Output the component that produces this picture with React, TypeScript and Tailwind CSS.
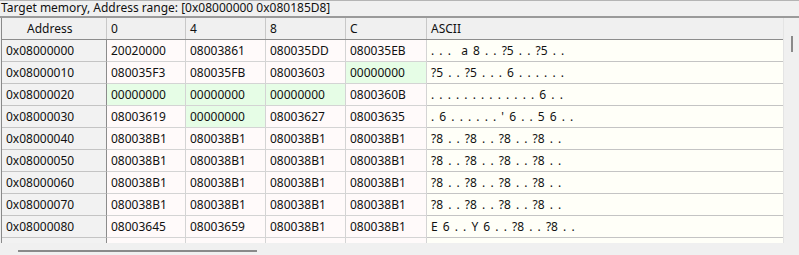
import React from "react";

interface Row {
  addr: string;
  words: string[];
  ascii: string;
}

const rows: Row[] = [
  { addr: "0x08000000", words: ["20020000", "08003861", "080035DD", "080035EB"], ascii: ". . .  a 8 . . ?5 . . ?5 . ." },
  { addr: "0x08000010", words: ["080035F3", "080035FB", "08003603", "00000000"], ascii: "?5 . . ?5 . . . 6 . . . . . ." },
  { addr: "0x08000020", words: ["00000000", "00000000", "00000000", "0800360B"], ascii: ". . . . . . . . . . . . . 6 . ." },
  { addr: "0x08000030", words: ["08003619", "00000000", "08003627", "08003635"], ascii: ". 6 . . . . . . ' 6 . . 5 6 . ." },
  { addr: "0x08000040", words: ["080038B1", "080038B1", "080038B1", "080038B1"], ascii: "?8 . . ?8 . . ?8 . . ?8 . ." },
  { addr: "0x08000050", words: ["080038B1", "080038B1", "080038B1", "080038B1"], ascii: "?8 . . ?8 . . ?8 . . ?8 . ." },
  { addr: "0x08000060", words: ["080038B1", "080038B1", "080038B1", "080038B1"], ascii: "?8 . . ?8 . . ?8 . . ?8 . ." },
  { addr: "0x08000070", words: ["080038B1", "080038B1", "080038B1", "080038B1"], ascii: "?8 . . ?8 . . ?8 . . ?8 . ." },
  { addr: "0x08000080", words: ["08003645", "08003659", "080038B1", "080038B1"], ascii: "E 6 . . Y 6 . . ?8 . . ?8 . ." },
  { addr: "", words: ["", "", "", ""], ascii: "" },
];

const cols = "grid grid-cols-[105px_79px_80px_80px_81px_1fr]";

export default function App() {
  return (
    <div
      className="w-[799px] h-[255px] bg-[#f0f0f0] text-[12px] text-[#111] overflow-hidden flex flex-col"
      style={{ fontFamily: '"Noto Sans", "Open Sans", sans-serif' }}
    >
      {/* title */}
      <div className="h-[16px] border-t border-[#b4b4b4] leading-[14px] pl-px whitespace-pre">
        Target memory, Address range: [0x08000000 0x080185D8]
      </div>
      <div className="h-[2px] bg-[#9a9a9a]" />

      <div className="flex h-[225px]">
        {/* table */}
        <div className="ml-px w-[782px] border-l border-[#8a8a8a] overflow-hidden">
          <div className={`${cols} h-[22px] bg-[#f0f0f0] border-b border-[#8c8c8c] leading-[21px]`}>
            <div className="pl-[25px] border-r border-[#c8c8c8]">Address</div>
            <div className="pl-[4px] border-r border-[#c8c8c8]">0</div>
            <div className="pl-[4px] border-r border-[#c8c8c8]">4</div>
            <div className="pl-[4px] border-r border-[#c8c8c8]">8</div>
            <div className="pl-[4px] border-r border-[#c8c8c8]">C</div>
            <div className="pl-[4px]">ASCII</div>
          </div>
          {rows.map((r, i) => (
            <div key={i} className={`${cols} h-[22px] leading-[21px]`}>
              <div className="pl-[4px] bg-[#f2f2f2] border-r border-b border-r-[#8c8c8c] border-b-[#c4c4c4]">{r.addr}</div>
              {r.words.map((w, j) => (
                <div
                  key={j}
                  className={`pl-[4px] border-r border-b border-[#d4d4d4] ${
                    w === "00000000" ? "bg-[#e6fde6]" : "bg-[#fffafa]"
                  }`}
                >
                  {w}
                </div>
              ))}
              <div className="pl-[4px] bg-[#fffff8] border-b border-[#c4c4c4] whitespace-pre [word-spacing:2px]">
                {r.ascii}
              </div>
            </div>
          ))}
        </div>

        {/* vertical scrollbar */}
        <div className="w-[16px] relative border-l border-[#e4e4e4]">
          <div className="absolute left-[7px] top-[18px] w-[2px] h-[16px] bg-[#8a8a8a]" />
        </div>
      </div>

      {/* horizontal scrollbar */}
      <div className="flex-1 relative">
        <div className="absolute left-[18px] top-[7px] w-[239px] h-[2px] bg-[#8a8a8a]" />
      </div>
    </div>
  );
}
